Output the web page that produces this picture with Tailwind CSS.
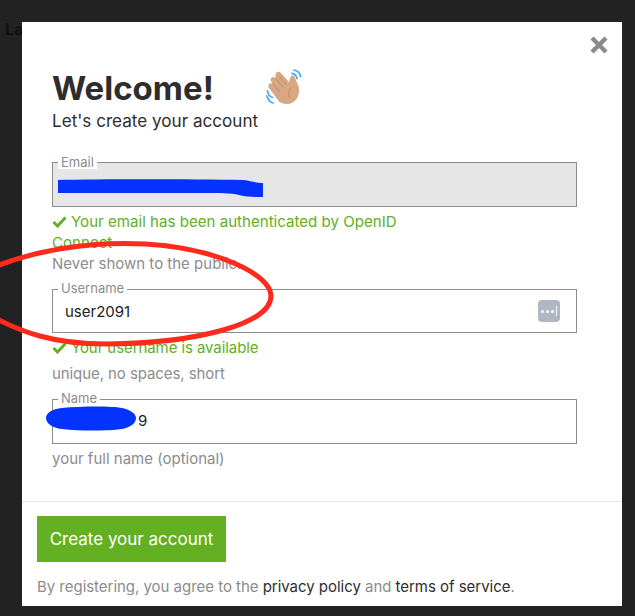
<!DOCTYPE html>
<html lang="en">
<head>
  <meta charset="UTF-8">
  <meta name="viewport" content="width=device-width, initial-scale=1.0">
  <title>Create your account</title>
  <script src="https://cdn.jsdelivr.net/npm/@tailwindcss/browser@4"></script>
</head>
<body class="bg-[#222222] font-['Inter','Noto_Sans',sans-serif]">
  <div class="relative w-[635px] h-[616px] overflow-hidden pt-[22px] pl-[22px]">
    <!-- page behind the modal -->
    <span class="absolute left-[5px] top-[19px] text-[16px] leading-[20px] font-bold text-[#111111]">La</span>

    <!-- Modal -->
    <div class="relative w-[600px] h-[584px] bg-white">
      <button class="absolute right-[14px] top-[14px] text-[#8a8a8a]">
        <svg width="18" height="18" viewBox="0 0 18 18" fill="none" stroke="currentColor" stroke-width="4.4"><path d="M2 2l14 14M16 2L2 16"/></svg>
      </button>

      <div class="h-[479px] pt-[46px] pl-[30px] pr-[45px]">
        <div class="flex items-center h-[40px]">
          <h1 class="w-[214px] text-[33px] leading-[40px] font-bold text-[#2d2d2d]">Welcome!</h1>
          <!-- waving hand -->
          <svg class="-mt-[1px]" width="37" height="37" viewBox="0 0 37 37">
            <path fill="#d8a884" d="M3 19C1 16 4 13 6.500 15L5 12C3.500 9 7 6.500 9.500 9L9.500 6.500C9 3.500 12.500 1.500 15 4L23 13L24.500 8C25.500 5.500 29 6 29 9L32.500 17C35 27 29 35 21 35C15 35 12 32 9 27Z"/>
            <path fill="none" stroke="#b98860" stroke-width="1" stroke-linecap="round" d="M7 15l7 8M10 10l7 8M14 8l6 7M25 19c-2.500 2.500-3 6-1.500 9"/>
            <path fill="none" stroke="#55acee" stroke-width="1.800" stroke-linecap="round" d="M26 4.500c2.500.3 4.500 2.300 5 5M28 1.200c3.500.4 6 3 6.500 6.500M1.500 22c.3 3 2.300 5.300 5 6.500M1 27c.8 3.500 3 6 6 7"/>
          </svg>
        </div>
        <p class="mt-[1px] text-[17.1px] leading-[24px] text-[#2d2d2d]">Let's create your account</p>

        <!-- Email -->
        <div class="relative mt-[29px] h-[45px] border border-[#8c8c8c] bg-[#e6e6e6]">
          <label class="absolute left-[5px] -top-[8px] bg-white px-[3px] text-[13px] leading-[14px] text-[#8c8c8c]">Email</label>
        </div>
        <div class="mt-[4px] w-[370px] text-[15.1px] leading-[21px] text-[#62b022]">
          <svg class="inline-block align-[-1px] mr-[4px]" width="15" height="12" viewBox="0 0 15 12" fill="none" stroke="currentColor" stroke-width="3"><path d="M1.500 6l4 4 8-8.500"/></svg>Your email has been authenticated by OpenID Connect
        </div>
        <p class="text-[15px] leading-[21px] text-[#8c8c8c]">Never shown to the public.</p>

        <!-- Username -->
        <div class="relative mt-[15px] h-[44px] border border-[#8c8c8c] flex items-center justify-between pl-[12px] pr-[16px]">
          <label class="absolute left-[5px] -top-[9px] bg-white px-[3px] text-[13px] leading-[14px] text-[#8c8c8c]">Username</label>
          <span class="pt-[2px] text-[15px] text-[#222222]">user2091</span>
          <span class="w-[22px] h-[22px] rounded-[4px] bg-[#b0b7c3] flex items-center justify-center gap-[2px]">
            <i class="w-[3px] h-[3px] rounded-full bg-white"></i>
            <i class="w-[3px] h-[3px] rounded-full bg-white"></i>
            <i class="w-[3px] h-[3px] rounded-full bg-white"></i>
            <i class="w-[1px] h-[10px] bg-white"></i>
          </span>
        </div>
        <div class="mt-[4px] text-[15px] tracking-[-0.08px] leading-[21px] text-[#62b022]">
          <svg class="inline-block align-[-1px] mr-[4px]" width="15" height="12" viewBox="0 0 15 12" fill="none" stroke="currentColor" stroke-width="3"><path d="M1.500 6l4 4 8-8.500"/></svg>Your username is available
        </div>
        <p class="mt-[5px] text-[15px] tracking-[-0.08px] leading-[21px] text-[#8c8c8c]">unique, no spaces, short</p>

        <!-- Name -->
        <div class="relative mt-[15px] h-[45px] border border-[#8c8c8c] flex items-center pl-[12px]">
          <label class="absolute left-[5px] -top-[9px] bg-white px-[3px] text-[13px] leading-[14px] text-[#8c8c8c]">Name</label>
          <span class="text-[15px] text-[#222222] pl-[73px]">9</span>
        </div>
        <p class="mt-[4px] text-[15px] leading-[21px] text-[#8c8c8c]">your full name (optional)</p>
      </div>

      <!-- Footer -->
      <div class="border-t border-[#e6e6e6] pt-[14px] pl-[15px]">
        <button class="w-[189px] h-[46px] pt-[1px] bg-[#64b023] text-white text-[17px]">Create your account</button>
        <p class="mt-[15px] text-[15px] tracking-[-0.03px] leading-[20px] text-[#8c8c8c]">By registering, you agree to the <a class="text-[#2d2d2d]">privacy policy</a> and <a class="text-[#2d2d2d]">terms of service</a>.</p>
      </div>
    </div>

    <!-- hand drawn annotations on top of the screenshot -->
    <svg class="absolute left-0 top-0 pointer-events-none" width="635" height="616" viewBox="0 0 635 616" fill="none">
      <path fill="#0433ff" d="M58 180c40-1 130-1 186 0 7 1 12 3 19 3v14c-10 0-16 0-24-2-8-2-20-2-34-2H58z"/>
      <path fill="#0433ff" d="M46 418c0-5 6-9 16-10 20-2 50-2 60 0 9 2 14 6 14 10 0 5-5 9-14 11-15 2-42 2-60 0-10-1-16-6-16-11z"/>
      <path stroke="#ff2a1c" stroke-width="5" d="M-20 273C30 250 90 241 145 244c70 4 126 30 126 52 0 27-70 47-165 48-50 0-85-10-125-34"/>
    </svg>
  </div>
</body>
</html>
